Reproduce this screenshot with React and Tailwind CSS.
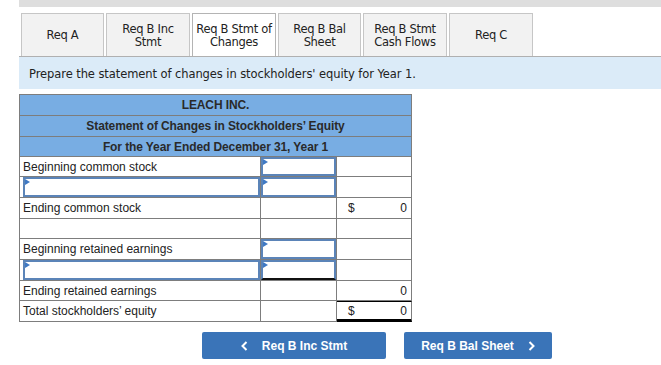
import React from "react";

const tabs = [
  { l: ["Req A"], w: "w-[83px]" },
  { l: ["Req B Inc", "Stmt"], w: "w-[84px]" },
  { l: ["Req B Stmt of", "Changes"], w: "w-[84px]", active: true },
  { l: ["Req B Bal", "Sheet"], w: "w-[83px]" },
  { l: ["Req B Stmt", "Cash Flows"], w: "w-[84px]" },
  { l: ["Req C"], w: "w-[84px]" },
];

function Flag() {
  return (
    <svg className="absolute left-0 top-0" width="5" height="6" viewBox="0 0 5 6">
      <polygon points="0,0 5,3 0,6" fill="#3f79c4" />
    </svg>
  );
}

function Input({ blackBottom }) {
  return (
    <div
      className={
        "relative h-full w-full border-2 border-[#5b84b8] " +
        (blackBottom ? "border-b-[#111]" : "")
      }
    >
      <Flag />
    </div>
  );
}

export default function App() {
  const rows = [
    { h: "h-[20px]", a: "Beginning common stock", b: "input" },
    { h: "h-[21px]", a: "input", b: "input" },
    { h: "h-[21px]", a: "Ending common stock", c: ["$", "0"] },
    { h: "h-[20px]" },
    { h: "h-[21px]", a: "Beginning retained earnings", b: "input" },
    { h: "h-[21px]", a: "input", b: "inputBlack" },
    { h: "h-[20px]", a: "Ending retained earnings", c: ["", "0"] },
    { h: "h-[21px]", a: "Total stockholders’ equity", c: ["$", "0"], total: true },
  ];
  return (
    <div className="w-[661px] h-[365px] bg-white overflow-hidden font-['Liberation_Sans',Arial,sans-serif]">
      <div className="ml-[19px] h-[7px] bg-[#dedede]" />
      <div className="mt-[6px] ml-[21px] flex gap-[2px] h-[43px]">
        {tabs.map((t, i) => (
          <div
            key={i}
            className={
              t.w +
              " flex flex-col items-center justify-center pt-[1px] border border-b-0 text-[11.5px] leading-[13px] text-[#222] font-['DejaVu_Sans',Verdana,sans-serif] tracking-[-0.3px] " +
              (t.active ? "bg-white border-[#b4b4b4]" : "bg-[#f2f2f2] border-[#c6c6c6]")
            }
          >
            {t.l.map((s, j) => (
              <span key={j}>{s}</span>
            ))}
          </div>
        ))}
      </div>
      <div className="ml-[19px] h-[33px] bg-[#dbebf8] border-t border-[#b0b0b0] flex items-center pl-[10px] pt-[3px] text-[11.5px] text-[#222] font-['DejaVu_Sans',Verdana,sans-serif] tracking-[-0.08px]">
        Prepare the statement of changes in stockholders' equity for Year 1.
      </div>
      <div className="ml-[19px] mt-[5px] w-[393px] border-l border-t border-[#7d7d7d] text-[12px] text-[#222]">
        {["LEACH INC.", "Statement of Changes in Stockholders’ Equity", "For the Year Ended December 31, Year 1"].map((s, i) => (
          <div
            key={i}
            className={
              (i === 2 ? "h-[20px]" : "h-[21px]") +
              " bg-[#78ade3] border-r border-b border-[#7d7d7d] flex items-center justify-center font-bold text-[#2a2a2a] tracking-[-0.1px]"
            }
          >
            {s}
          </div>
        ))}
        {rows.map((r, i) => (
          <div key={i} className={r.h + " flex"}>
            <div className="w-[241px] border-r border-b border-[#7d7d7d] flex items-center pl-[3px]">
              {r.a === "input" ? <Input /> : r.a}
            </div>
            <div className="w-[76px] border-r border-b border-[#7d7d7d] flex items-center">
              {r.b === "input" && <Input />}
              {r.b === "inputBlack" && <Input blackBottom />}
            </div>
            <div
              className={
                "w-[75px] border-r border-[#7d7d7d] flex items-center justify-between pl-[11px] pr-[4px] " +
                (r.total ? "border-t border-t-black border-b-[3px] border-b-black" : "border-b")
              }
            >
              {r.c && (
                <>
                  <span>{r.c[0]}</span>
                  <span>{r.c[1]}</span>
                </>
              )}
            </div>
          </div>
        ))}
      </div>
      <div className="mt-[10px] flex">
        <div className="ml-[202px] w-[184px] h-[27px] rounded-[2px] bg-[#3a74b8] text-white font-bold text-[12px] flex items-center justify-center gap-[14px]">
          <svg width="7" height="10" viewBox="0 0 7 10">
            <polyline points="5.5,1 1.5,5 5.5,9" fill="none" stroke="white" strokeWidth="2" />
          </svg>
          <span>Req B Inc Stmt</span>
        </div>
        <div className="ml-[18px] w-[148px] h-[27px] rounded-[2px] bg-[#3a74b8] text-white font-bold text-[12px] flex items-center justify-center gap-[14px]">
          <span>Req B Bal Sheet</span>
          <svg width="7" height="10" viewBox="0 0 7 10">
            <polyline points="1.5,1 5.5,5 1.5,9" fill="none" stroke="white" strokeWidth="2" />
          </svg>
        </div>
      </div>
    </div>
  );
}
